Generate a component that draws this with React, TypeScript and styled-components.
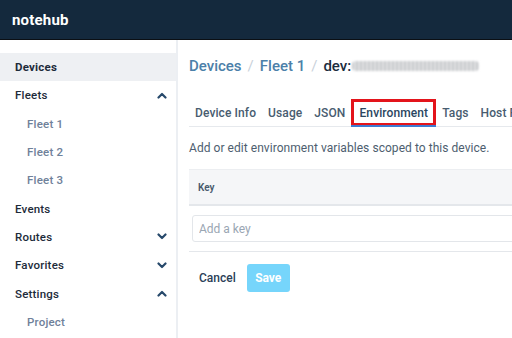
import React from 'react';
import styled, { createGlobalStyle } from 'styled-components';

const GlobalStyle = createGlobalStyle`
	html, body {
		margin: 0;
		padding: 0;
		background: #fff;
		font-family: 'Roboto', 'Liberation Sans', sans-serif;
		overflow: hidden;
	}
`;

const Page = styled.div`
	width: 512px;
	height: 338px;
	display: flex;
	flex-direction: column;
	overflow: hidden;
`;

const Header = styled.header`
	height: 39px;
	background: #14293d;
	border-bottom: 1px solid #0b0f14;
	display: flex;
	align-items: center;
	padding-left: 12px;
	flex-shrink: 0;
`;

const Logo = styled.div`
	color: #fff;
	font-size: 15px;
	font-weight: 700;
	letter-spacing: 0.2px;
`;

const Body = styled.div`
	flex: 1;
	display: flex;
	min-height: 0;
`;

const Sidebar = styled.nav`
	width: 176px;
	flex-shrink: 0;
	border-right: 2px solid #eceff3;
	padding-top: 13px;
	box-sizing: content-box;
`;

const NavItem = styled.div<{ $active?: boolean; $sub?: boolean }>`
	height: 28.3px;
	display: flex;
	align-items: center;
	justify-content: space-between;
	padding: 0 9px 0 ${({ $sub }) => ($sub ? '27px' : '15px')};
	background: ${({ $active }) => ($active ? '#eef0f3' : 'transparent')};
	color: ${({ $sub }) => ($sub ? '#6f819a' : '#1d2b3a')};
	font-size: 11.5px;
	font-weight: ${({ $active }) => ($active ? 700 : 500)};
	letter-spacing: 0.2px;
`;

const Chevron: React.FC<{ up?: boolean }> = ({ up }) => (
	<svg width="10" height="7" viewBox="0 0 10 7">
		<path
			d={up ? 'M1.5 5.5 L5 2 L8.5 5.5' : 'M1.5 1.5 L5 5 L8.5 1.5'}
			fill="none"
			stroke="#27496b"
			strokeWidth="2.2"
			strokeLinecap="round"
			strokeLinejoin="round"
		/>
	</svg>
);

const Main = styled.main`
	flex: 1;
	padding-left: 11px;
	min-width: 0;
	overflow: hidden;
`;

const Breadcrumb = styled.div`
	height: 26px;
	margin-top: 13px;
	display: flex;
	align-items: center;
	font-size: 15px;
	font-weight: 500;
	white-space: nowrap;
`;

const Crumb = styled.span`
	color: #4b80a9;
`;

const Slash = styled.span`
	color: #c9d1da;
	margin: 0 6px;
	font-weight: 400;
`;

const Current = styled.span`
	color: #1b2d40;
`;

const Blurred = styled.span`
	display: inline-block;
	width: 127px;
	height: 10px;
	margin-left: 1px;
	background: repeating-linear-gradient(90deg, #c4c6c9 0 2px, #e4e5e7 2px 4px);
	filter: blur(1.2px);
	border-radius: 4px;
`;

const Tabs = styled.div`
	margin-top: 20px;
	height: 27px;
	display: flex;
	align-items: center;
	border-bottom: 1px solid #e6e9ed;
	white-space: nowrap;
`;

const Tab = styled.div<{ $active?: boolean }>`
	position: relative;
	height: 27px;
	display: flex;
	align-items: center;
	padding: 0 ${({ $active }) => ($active ? '5px' : '3px')};
	font-size: 12px;
	font-weight: 500;
	color: ${({ $active }) => ($active ? '#2a4660' : '#485c70')};
	letter-spacing: 0.1px;
	box-sizing: border-box;
	border: 3px solid ${({ $active }) => ($active ? '#e3141b' : 'transparent')};

	&::after {
		content: '';
		display: ${({ $active }) => ($active ? 'block' : 'none')};
		position: absolute;
		left: -3px;
		right: -3px;
		bottom: -4px;
		height: 2px;
		background: #3d7bd2;
	}
`;

const Description = styled.p`
	margin: 14px 0 0;
	font-size: 12px;
	color: #4d5e6f;
	letter-spacing: 0.05px;
	white-space: nowrap;
`;

const TableHead = styled.div`
	margin-top: 14px;
	height: 34px;
	background: #f5f6f8;
	border-top: 1px solid #eceef1;
	border-bottom: 2px solid #e4e7eb;
	display: flex;
	align-items: center;
	padding-left: 9px;
	font-size: 10px;
	font-weight: 600;
	color: #485a6c;
	width: 600px;
`;

const InputRow = styled.div`
	padding: 9px 0 9px 3px;
	border-bottom: 1px solid #e4e7eb;
	width: 600px;
`;

const KeyInput = styled.input`
	width: 100%;
	height: 27px;
	box-sizing: border-box;
	border: 1px solid #e3e6ea;
	border-radius: 3px;
	padding: 0 6px;
	font-family: inherit;
	font-size: 12px;
	color: #1d2b3a;
	outline: none;

	&::placeholder {
		color: #9aa6b3;
	}
`;

const Actions = styled.div`
	margin-top: 12px;
	display: flex;
	align-items: center;
	gap: 11px;
	padding-left: 10px;
`;

const CancelButton = styled.button`
	background: none;
	border: none;
	padding: 0;
	font-family: inherit;
	font-size: 12px;
	font-weight: 500;
	color: #2b4057;
`;

const SaveButton = styled.button`
	width: 43px;
	height: 28px;
	border: none;
	border-radius: 3px;
	background: #76d5fb;
	color: #fff;
	font-family: inherit;
	font-size: 12px;
	font-weight: 700;
`;

const navItems = [
	{ label: 'Devices', active: true },
	{ label: 'Fleets', chevron: 'up' },
	{ label: 'Fleet 1', sub: true },
	{ label: 'Fleet 2', sub: true },
	{ label: 'Fleet 3', sub: true },
	{ label: 'Events' },
	{ label: 'Routes', chevron: 'down' },
	{ label: 'Favorites', chevron: 'down' },
	{ label: 'Settings', chevron: 'up' },
	{ label: 'Project', sub: true },
];

const tabs = ['Device Info', 'Usage', 'JSON', 'Environment', 'Tags', 'Host Firmware'];

const App: React.FC = () => (
	<Page>
		<GlobalStyle />
		<Header>
			<Logo>notehub</Logo>
		</Header>
		<Body>
			<Sidebar>
				{navItems.map((item) => (
					<NavItem key={item.label} $active={item.active} $sub={item.sub}>
						<span>{item.label}</span>
						{item.chevron && <Chevron up={item.chevron === 'up'} />}
					</NavItem>
				))}
			</Sidebar>
			<Main>
				<Breadcrumb>
					<Crumb>Devices</Crumb>
					<Slash>/</Slash>
					<Crumb>Fleet 1</Crumb>
					<Slash>/</Slash>
					<Current>dev:</Current>
					<Blurred />
				</Breadcrumb>
				<Tabs>
					{tabs.map((t) => (
						<Tab key={t} $active={t === 'Environment'}>
							{t}
						</Tab>
					))}
				</Tabs>
				<Description>Add or edit environment variables scoped to this device.</Description>
				<TableHead>Key</TableHead>
				<InputRow>
					<KeyInput placeholder="Add a key" />
				</InputRow>
				<Actions>
					<CancelButton>Cancel</CancelButton>
					<SaveButton>Save</SaveButton>
				</Actions>
			</Main>
		</Body>
	</Page>
);

export default App;
